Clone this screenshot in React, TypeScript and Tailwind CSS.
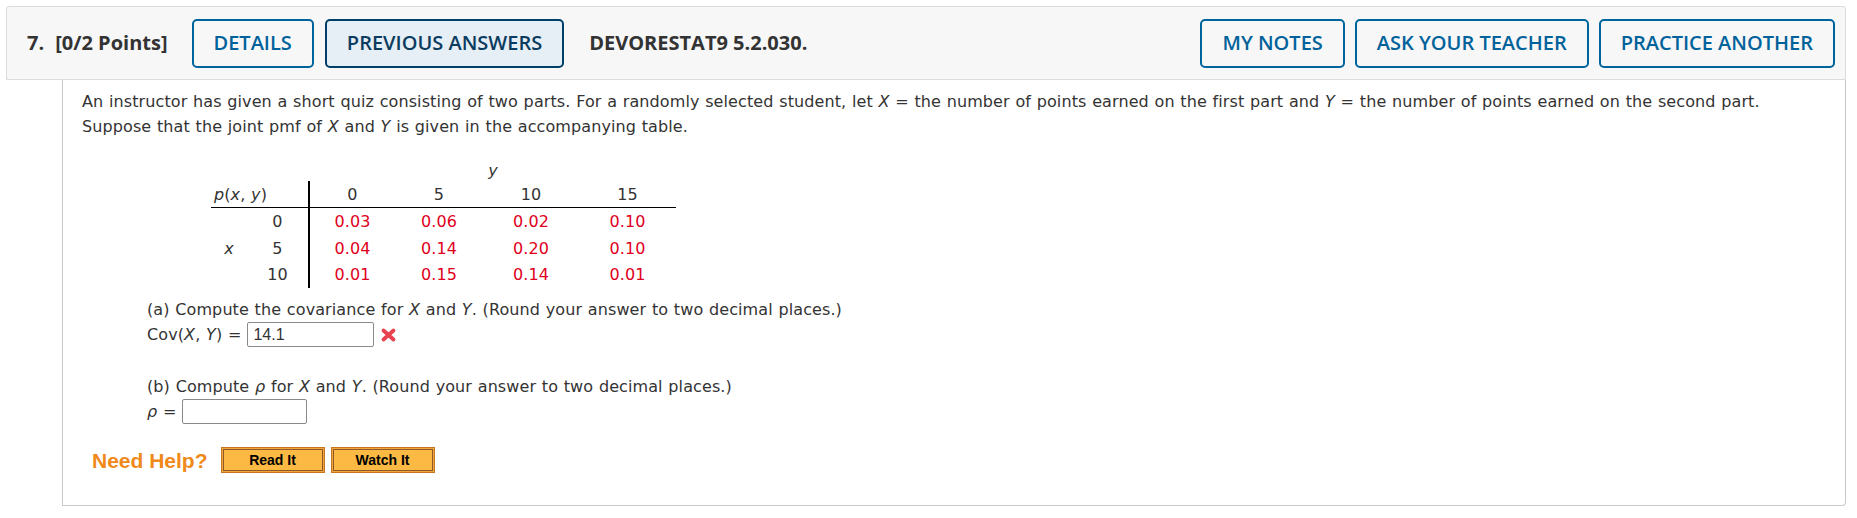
import React from 'react';

const HeaderButton: React.FC<{ label: string; active?: boolean; className?: string }> = ({ label, active, className = '' }) => (
  <button
    className={
      (active
        ? 'border-[#003f69] bg-[#e6eef6] text-[#0b3c60] '
        : 'border-[#00649c] bg-transparent text-[#00629b] ') +
      "flex h-[49px] items-center whitespace-nowrap rounded-[5px] border-2 px-[20px] font-['Open_Sans',sans-serif] text-[20px] font-semibold " +
      className
    }
  >
    {label}
  </button>
);

const HelpButton: React.FC<{ label: string; className?: string }> = ({ label, className = '' }) => (
  <button className={'h-[26px] w-[104px] border border-[#c9761f] bg-[#f3a43a] p-px ' + className}>
    <span className="flex h-full w-full items-center justify-center border border-[#8a5a2b] bg-[#fcb943] font-['Liberation_Sans',Arial,sans-serif] text-[14px] font-bold text-black">
      {label}
    </span>
  </button>
);

const WrongMark = () => (
  <svg width="17" height="16" viewBox="0 0 17 16" className="ml-[6px]">
    <path d="M3.5 3.5 L13.5 12.5 M13.5 3.5 L3.5 12.5" stroke="#e8414f" strokeWidth="3.8" strokeLinecap="round" />
  </svg>
);

const pmf = [
  { x: '0', label: '', vals: ['0.03', '0.06', '0.02', '0.10'] },
  { x: '5', label: 'x', vals: ['0.04', '0.14', '0.20', '0.10'] },
  { x: '10', label: '', vals: ['0.01', '0.15', '0.14', '0.01'] },
];

const rowHeights = ['h-[27px]', 'h-[26px]', 'h-[27px]'];

const PmfTable = () => (
  <div className="ml-[129px] mt-[20px] grid w-[465px] grid-cols-[36px_61px_2px_85px_88px_96px_97px] text-[#333]">
    {/* y label */}
    <div className="col-span-3 h-[22px]" />
    <div className="col-span-4 flex h-[22px] items-center justify-center italic">y</div>

    {/* header row */}
    <div className="col-span-2 flex h-[26px] items-center pl-[3px]">
      <span>
        <i>p</i>(<i>x</i>, <i>y</i>)
      </span>
    </div>
    <div className="h-[26px] bg-black" />
    {['0', '5', '10', '15'].map((c) => (
      <div key={c} className="flex h-[26px] items-center justify-center">
        {c}
      </div>
    ))}
    <div className="col-span-7 h-px bg-black" />

    {pmf.map((row, i) => (
      <React.Fragment key={row.x}>
        <div className={rowHeights[i] + ' flex items-center justify-center italic'}>{row.label}</div>
        <div className={rowHeights[i] + ' flex items-center justify-center'}>{row.x}</div>
        <div className={rowHeights[i] + ' bg-black'} />
        {row.vals.map((v, j) => (
          <div key={j} className={rowHeights[i] + ' flex items-center justify-center text-[#e0001b]'}>
            {v}
          </div>
        ))}
      </React.Fragment>
    ))}
  </div>
);

export default function App() {
  return (
    <div className="min-h-[518px] w-[1857px] bg-white pt-[6px]">
      {/* question header bar */}
      <div className="ml-[6px] box-border flex h-[74px] w-[1840px] items-center rounded-t-[3px] border border-[#dcdcdc] bg-[#f7f7f7] pl-[20px] pr-[10px] font-['Open_Sans',sans-serif] text-[20px] text-[#333]">
        <span className="font-bold">7.</span>
        <span className="ml-[11px] font-bold">[0/2 Points]</span>
        <HeaderButton label="DETAILS" className="ml-[24px]" />
        <HeaderButton label="PREVIOUS ANSWERS" active className="ml-[11px]" />
        <span className="ml-[25px] font-bold">DEVORESTAT9 5.2.030.</span>
        <div className="ml-auto flex gap-[10px]">
          <HeaderButton label="MY NOTES" />
          <HeaderButton label="ASK YOUR TEACHER" />
          <HeaderButton label="PRACTICE ANOTHER" />
        </div>
      </div>

      {/* question body */}
      <div className="ml-[62px] box-border w-[1784px] rounded-br-[4px] border-x border-b border-[#c8c8c8] pb-[32px] pl-[19px] pt-[9px] font-['DejaVu_Sans',Verdana,sans-serif] text-[16px] leading-[25px] tracking-[0.1px] text-[#333] [word-spacing:0.5px]">
        <p className="whitespace-nowrap">
          An instructor has given a short quiz consisting of two parts. For a randomly selected student, let <i>X</i> = the number of points earned on the first part and <i>Y</i> = the number of points earned on the second part.
          <br />
          Suppose that the joint pmf of <i>X</i> and <i>Y</i> is given in the accompanying table.
        </p>

        <PmfTable />

        <div className="ml-[65px] mt-[9px]">
          <p>
            (a) Compute the covariance for <i>X</i> and <i>Y</i>. (Round your answer to two decimal places.)
          </p>
          <div className="flex h-[25px] items-center">
            <span>
              Cov(<i>X</i>, <i>Y</i>) =
            </span>
            <div className="ml-[6px] box-border flex h-[25px] w-[127px] items-center rounded-[2px] border border-[#8a8a8a] pl-[5px] font-['Liberation_Sans',Arial,sans-serif] text-[16px] tracking-normal text-[#333]">
              14.1
            </div>
            <WrongMark />
          </div>

          <p className="mt-[27px]">
            (b) Compute <i>ρ</i> for <i>X</i> and <i>Y</i>. (Round your answer to two decimal places.)
          </p>
          <div className="flex h-[25px] items-center">
            <span>
              <i>ρ</i> =
            </span>
            <div className="ml-[6px] box-border h-[25px] w-[125px] rounded-[2px] border border-[#8a8a8a]" />
          </div>
        </div>

        <div className="ml-[10px] mt-[23px] flex h-[26px] items-center tracking-normal [word-spacing:normal]">
          <span className="font-['Liberation_Sans',Arial,sans-serif] text-[21px] font-bold text-[#ef8a1a]">Need Help?</span>
          <HelpButton label="Read It" className="ml-[13px]" />
          <HelpButton label="Watch It" className="ml-[6px]" />
        </div>
      </div>
    </div>
  );
}
